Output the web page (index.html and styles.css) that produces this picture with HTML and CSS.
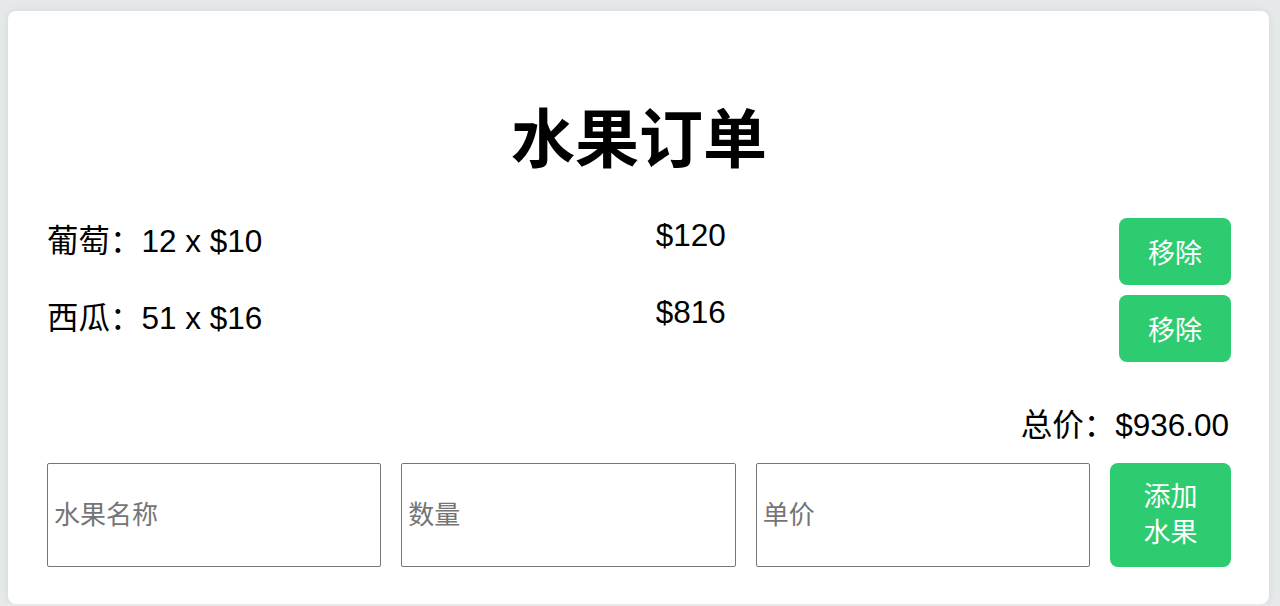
FILE: index.html
```html
<!DOCTYPE html>
<html lang="zh-CN">
<head>
    <meta charset="UTF-8">
    <meta name="viewport" content="width=device-width, initial-scale=1.0">
    <title>水果订单</title>
    <link rel="stylesheet" href="styles.css">
</head>
<body>
    <div class="container">
        <h1>水果订单</h1>

        <!-- Order list -->
        <ul class="order-list">
            <li class="order-item">
                <span class="item-name">葡萄：12 x $10</span>
                <span class="item-price">$120</span>
                <button class="remove-btn">移除</button>
            </li>
            <li class="order-item">
                <span class="item-name">西瓜：51 x $16</span>
                <span class="item-price">$816</span>
                <button class="remove-btn">移除</button>
            </li>
        </ul>

        <div class="total">总价：$936.00</div>

        <!-- Add fruit form -->
        <form class="add-form">
            <input type="text" placeholder="水果名称">
            <input type="number" placeholder="数量">
            <input type="number" placeholder="单价">
            <button type="submit" class="add-btn">添加水果</button>
        </form>
    </div>
</body>
</html>
```

FILE: styles.css
```css
body {
    font-family: "Liberation Sans", Arial, "Noto Sans CJK SC", sans-serif;
    margin: 0;
    padding: 11px 11px 0 8px;
    background-color: #e5e9ea;
    color: #000;
}

.container {
    background-color: #fff;
    border-radius: 8px;
    box-shadow: 0 0 8px rgba(0, 0, 0, 0.08);
    padding: 39px 38px 37px 39px;
}

h1 {
    text-align: center;
    font-size: 64px;
    line-height: 76px;
    font-weight: bold;
    margin: 52px 0 40px;
}

.order-list {
    list-style: none;
    margin: 0;
    padding: 0;
}

.order-item {
    display: flex;
    justify-content: space-between;
    align-items: flex-start;
    height: 67px;
    margin-bottom: 10px;
    font-size: 31.5px;
    line-height: 35px;
}

.item-name {
    padding-top: 6px;
}

button {
    border: none;
    border-radius: 8px;
    background-color: #2ecc71;
    color: #fff;
    font-family: "Liberation Sans", Arial, "Noto Sans CJK SC", sans-serif;
    font-size: 27px;
    cursor: pointer;
}

.remove-btn {
    width: 112px;
    height: 67px;
    padding: 0;
    white-space: nowrap;
}

.total {
    text-align: right;
    font-size: 31.5px;
    line-height: 35px;
    margin-top: 46px;
    padding-right: 2px;
}

.add-form {
    display: flex;
    gap: 20px;
    margin-top: 20px;
    height: 104px;
}

.add-form input {
    flex: 1;
    min-width: 0;
    box-sizing: border-box;
    height: 104px;
    border: 1px solid #767676;
    border-radius: 2px;
    padding: 0 6px;
    font-family: "Liberation Sans", Arial, "Noto Sans CJK SC", sans-serif;
    font-size: 26px;
}

.add-form input::placeholder {
    color: #757575;
}

.add-btn {
    width: 121px;
    flex-shrink: 0;
    padding: 0 30px;
    line-height: 36px;
}
```
